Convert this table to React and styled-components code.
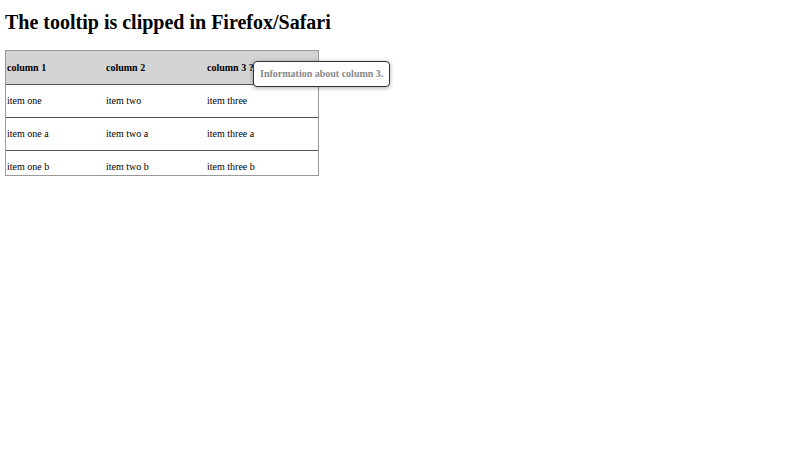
import React from "react";
import styled, { createGlobalStyle } from "styled-components";

const Global = createGlobalStyle`
  html, body { margin: 0; padding: 0; background: #fff; }
  body { font-family: "Liberation Serif", "Times New Roman", serif; color: #000; }
`;

const Page = styled.div`
  padding: 0 5px;
`;

const Title = styled.h1`
  font-size: 20px;
  font-weight: bold;
  margin: 0;
  padding-top: 11px;
  line-height: 23px;
  height: 39px;
`;

const Frame = styled.div`
  position: relative;
  width: 314px;
`;

const Clip = styled.div`
  height: 126px;
  overflow: hidden;
  border: 1px solid #999;
  box-sizing: border-box;
`;

const Table = styled.table`
  width: 100%;
  table-layout: fixed;
  border-collapse: collapse;
  font-size: 10px;
`;

const Col = styled.col`
  width: ${(p) => p.$w || "auto"};
`;

const Row = styled.tr`
  height: 33px;
  background: ${(p) => (p.$head ? "#d3d3d3" : "#fff")};
  border-bottom: 1px solid #555;
`;

const Cell = styled.td`
  padding: 0 0 0 1px;
  text-align: left;
  vertical-align: middle;
  font-weight: ${(p) => (p.$head ? "bold" : "normal")};
  white-space: nowrap;
`;

const Tip = styled.div`
  position: absolute;
  left: 248px;
  top: 11px;
  white-space: nowrap;
  background: #fff;
  border: 1px solid #333;
  border-radius: 4px;
  box-shadow: 0 1px 4px rgba(0, 0, 0, 0.35);
  color: #888;
  font-weight: bold;
  font-size: 10px;
  padding: 6px;
  line-height: 12px;
`;

const rows = [
  ["item one", "item two", "item three"],
  ["item one a", "item two a", "item three a"],
  ["item one b", "item two b", "item three b"],
];

export default function App() {
  return (
    <>
      <Global />
      <Page>
        <Title>The tooltip is clipped in Firefox/Safari</Title>
        <Frame>
          <Clip>
            <Table>
              <colgroup>
                <Col $w="99px" />
                <Col $w="101px" />
                <Col />
              </colgroup>
              <tbody>
                <Row $head>
                  <Cell $head>column 1</Cell>
                  <Cell $head>column 2</Cell>
                  <Cell $head>column 3 ?</Cell>
                </Row>
                {rows.map((r, i) => (
                  <Row key={i}>
                    {r.map((c, j) => (
                      <Cell key={j}>{c}</Cell>
                    ))}
                  </Row>
                ))}
              </tbody>
            </Table>
          </Clip>
          <Tip>Information about column 3.</Tip>
        </Frame>
      </Page>
    </>
  );
}
